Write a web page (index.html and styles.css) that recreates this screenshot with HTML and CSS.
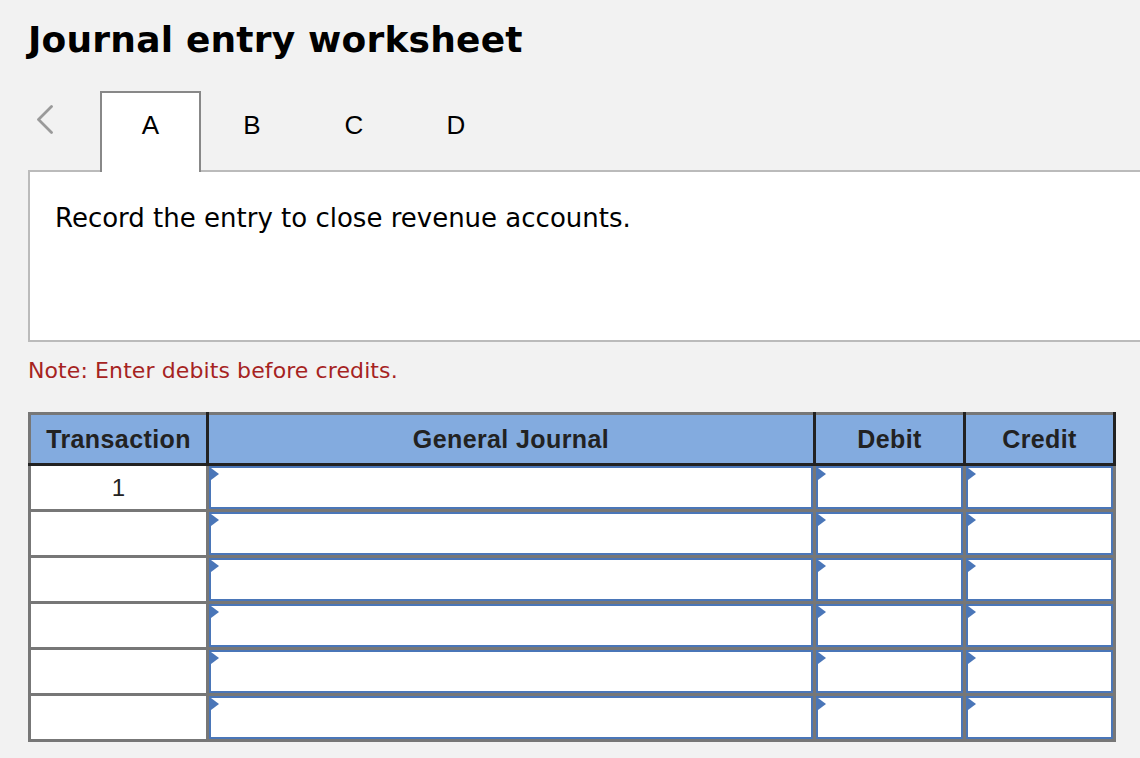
FILE: index.html
```html
<!DOCTYPE html>
<html lang="en">
<head>
<meta charset="utf-8">
<title>Journal entry worksheet</title>
<link rel="stylesheet" href="styles.css">
</head>
<body>
<div class="page">
  <h1 class="title">Journal entry worksheet</h1>

  <div class="tabbar">
    <div class="prev">
      <svg width="18" height="29" viewBox="0 0 18 29" aria-hidden="true"><polyline points="15.5,1.5 2.5,14.5 15.5,27.5" fill="none" stroke="#9a9a9a" stroke-width="2.8" stroke-linecap="round" stroke-linejoin="round"/></svg>
    </div>
    <div class="tab active">A</div>
    <div class="tab">B</div>
    <div class="tab">C</div>
    <div class="tab">D</div>
  </div>

  <div class="panel">
    <p class="prompt">Record the entry to close revenue accounts.</p>
  </div>

  <p class="note">Note: Enter debits before credits.</p>

  <table class="journal">
    <colgroup>
      <col class="c-tr"><col class="c-gj"><col class="c-amt"><col class="c-amt">
    </colgroup>
    <thead>
      <tr><th>Transaction</th><th>General Journal</th><th>Debit</th><th>Credit</th></tr>
    </thead>
    <tbody>
      <tr><td class="num">1</td><td><div class="field"></div></td><td><div class="field"></div></td><td><div class="field"></div></td></tr>
      <tr><td class="num"></td><td><div class="field"></div></td><td><div class="field"></div></td><td><div class="field"></div></td></tr>
      <tr><td class="num"></td><td><div class="field"></div></td><td><div class="field"></div></td><td><div class="field"></div></td></tr>
      <tr><td class="num"></td><td><div class="field"></div></td><td><div class="field"></div></td><td><div class="field"></div></td></tr>
      <tr><td class="num"></td><td><div class="field"></div></td><td><div class="field"></div></td><td><div class="field"></div></td></tr>
      <tr><td class="num"></td><td><div class="field"></div></td><td><div class="field"></div></td><td><div class="field"></div></td></tr>
    </tbody>
  </table>
</div>
</body>
</html>
```

FILE: styles.css
```css
html, body {
  margin: 0;
  padding: 0;
  background: #f2f2f2;
  overflow: hidden;
}

.page {
  padding-left: 28px;
  font-family: "DejaVu Sans", Verdana, sans-serif;
  color: #000;
}

.title {
  margin: 0;
  padding-top: 19px;
  font-family: "DejaVu Sans", Verdana, sans-serif;
  font-weight: bold;
  font-size: 36px;
  line-height: 42px;
  letter-spacing: 0.2px;
  color: #000;
}

.tabbar {
  display: flex;
  align-items: stretch;
  height: 81px;
  margin-top: 30px;
  margin-bottom: -2px;
  position: relative;
  z-index: 1;
}

.prev {
  width: 72px;
  padding-left: 8px;
  padding-top: 14px;
  box-sizing: border-box;
}

.prev svg {
  display: block;
}

.tab {
  width: 102px;
  box-sizing: border-box;
  border: 2px solid transparent;
  border-bottom: 0;
  padding-top: 17px;
  text-align: center;
  font-family: "Liberation Sans", Arial, sans-serif;
  font-size: 26px;
  line-height: 30px;
  color: #000;
}

.tab.active {
  width: 101px;
  background: #fff;
  border-color: #888;
}

.panel {
  height: 172px;
  box-sizing: border-box;
  background: #fff;
  border: 2px solid #bbb;
  border-right: 0;
  padding: 31px 0 0 25px;
}

.prompt {
  margin: 0;
  font-size: 26px;
  line-height: 30px;
  color: #000;
}

.note {
  margin: 16px 0 0;
  font-size: 22px;
  line-height: 26px;
  letter-spacing: 0.1px;
  color: #a6231f;
}

.journal {
  margin-top: 28px;
  border-collapse: collapse;
  table-layout: fixed;
  width: 1088px;
  font-family: "Liberation Sans", Arial, sans-serif;
}

.c-tr { width: 178px; }
.c-gj { width: 607px; }
.c-amt { width: 150px; }

.journal th {
  height: 48px;
  padding: 0;
  background: #83abdf;
  border: 3px solid #222;
  border-top-color: #777;
  font-size: 25px;
  letter-spacing: 0.4px;
  font-weight: bold;
  color: #222;
  text-align: center;
  vertical-align: middle;
}

.journal th:first-child {
  border-left-color: #777;
}

.journal td {
  height: 43px;
  padding: 0;
  background: #fff;
  border: 3px solid #777;
  vertical-align: top;
}

.journal td.num {
  text-align: center;
  vertical-align: middle;
  font-size: 24px;
  color: #222;
}

.field {
  position: relative;
  height: 43px;
  box-sizing: border-box;
  border: 2px solid #4a76b8;
  background: #fff;
}

.field::before {
  content: "";
  position: absolute;
  left: 0;
  top: 0;
  width: 0;
  height: 0;
  border-left: 8px solid #4a76b8;
  border-top: 6px solid transparent;
  border-bottom: 6px solid transparent;
}
```
